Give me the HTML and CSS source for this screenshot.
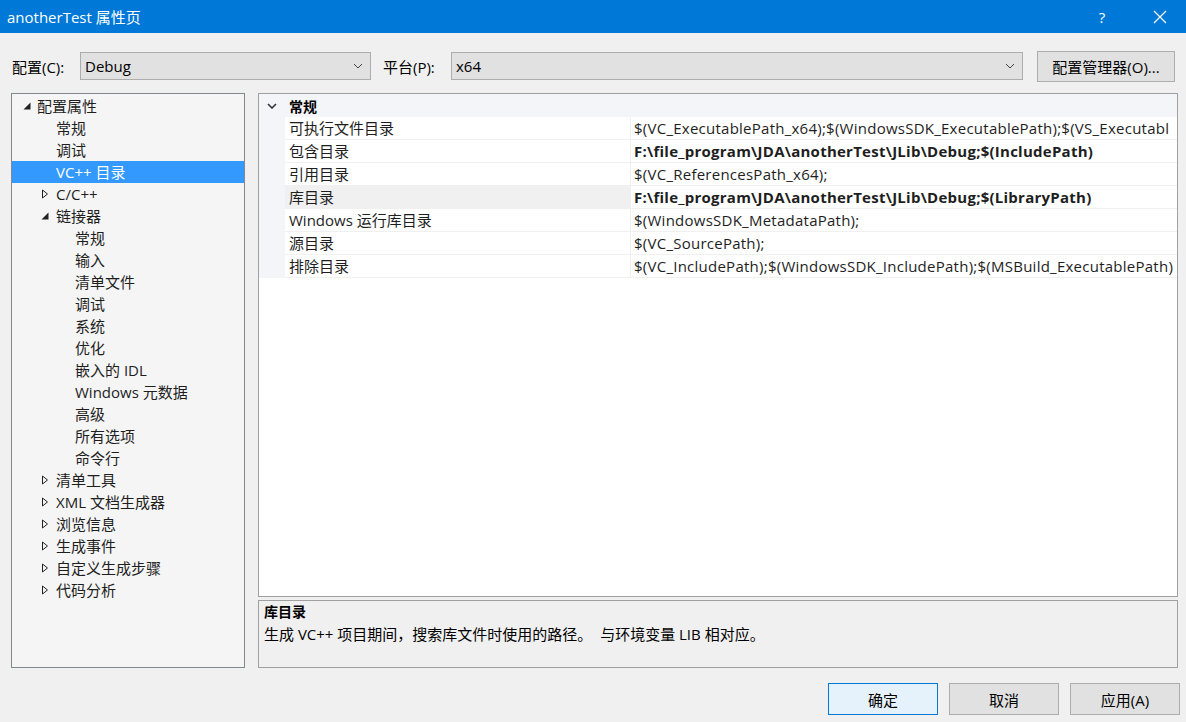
FILE: index.html
```html
<!DOCTYPE html>
<html lang="zh-CN">
<head>
    <meta charset="UTF-8">
    <title>anotherTest 属性页</title>
    <link rel="stylesheet" href="styles.css">
</head>
<body>
<div class="dlg">
    <div class="titlebar">
        <span class="title">anotherTest 属性页</span>
        <span class="tb_help">?</span>
        <span class="tb_close">
            <svg width="14" height="14" viewBox="0 0 14 14"><path d="M1 1L13 13M13 1L1 13" stroke="#fff" stroke-width="1.2" fill="none"/></svg>
        </span>
    </div>

    <div class="cfg_row">
        <label class="cfg_label">配置(C):</label>
        <div class="combo combo_cfg"><span>Debug</span><svg class="chev" width="10" height="6" viewBox="0 0 10 6"><path d="M1 1L5 5L9 1" stroke="#444" stroke-width="1" fill="none"/></svg></div>
        <label class="cfg_label plat_label">平台(P):</label>
        <div class="combo combo_plat"><span>x64</span><svg class="chev" width="10" height="6" viewBox="0 0 10 6"><path d="M1 1L5 5L9 1" stroke="#444" stroke-width="1" fill="none"/></svg></div>
        <div class="btn btn_mgr">配置管理器(O)...</div>
    </div>

    <div class="main">
        <div class="tree">
            <div class="node lv0"><span class="tw"><svg width="8" height="8" viewBox="0 0 8 8"><path d="M7.5 0.5L7.5 7.5L0.5 7.5Z" fill="#222"/></svg></span>配置属性</div>
            <div class="node lv1"><span class="tw"></span>常规</div>
            <div class="node lv1"><span class="tw"></span>调试</div>
            <div class="node lv1 sel"><span class="tw"></span>VC++ 目录</div>
            <div class="node lv1"><span class="tw"><svg width="8" height="10" viewBox="0 0 8 10"><path d="M1.5 1L6.5 5L1.5 9Z" stroke="#222" stroke-width="1" fill="none"/></svg></span>C/C++</div>
            <div class="node lv1"><span class="tw"><svg width="8" height="8" viewBox="0 0 8 8"><path d="M7.5 0.5L7.5 7.5L0.5 7.5Z" fill="#222"/></svg></span>链接器</div>
            <div class="node lv2"><span class="tw"></span>常规</div>
            <div class="node lv2"><span class="tw"></span>输入</div>
            <div class="node lv2"><span class="tw"></span>清单文件</div>
            <div class="node lv2"><span class="tw"></span>调试</div>
            <div class="node lv2"><span class="tw"></span>系统</div>
            <div class="node lv2"><span class="tw"></span>优化</div>
            <div class="node lv2"><span class="tw"></span>嵌入的 IDL</div>
            <div class="node lv2"><span class="tw"></span>Windows 元数据</div>
            <div class="node lv2"><span class="tw"></span>高级</div>
            <div class="node lv2"><span class="tw"></span>所有选项</div>
            <div class="node lv2"><span class="tw"></span>命令行</div>
            <div class="node lv1"><span class="tw"><svg width="8" height="10" viewBox="0 0 8 10"><path d="M1.5 1L6.5 5L1.5 9Z" stroke="#222" stroke-width="1" fill="none"/></svg></span>清单工具</div>
            <div class="node lv1"><span class="tw"><svg width="8" height="10" viewBox="0 0 8 10"><path d="M1.5 1L6.5 5L1.5 9Z" stroke="#222" stroke-width="1" fill="none"/></svg></span>XML 文档生成器</div>
            <div class="node lv1"><span class="tw"><svg width="8" height="10" viewBox="0 0 8 10"><path d="M1.5 1L6.5 5L1.5 9Z" stroke="#222" stroke-width="1" fill="none"/></svg></span>浏览信息</div>
            <div class="node lv1"><span class="tw"><svg width="8" height="10" viewBox="0 0 8 10"><path d="M1.5 1L6.5 5L1.5 9Z" stroke="#222" stroke-width="1" fill="none"/></svg></span>生成事件</div>
            <div class="node lv1"><span class="tw"><svg width="8" height="10" viewBox="0 0 8 10"><path d="M1.5 1L6.5 5L1.5 9Z" stroke="#222" stroke-width="1" fill="none"/></svg></span>自定义生成步骤</div>
            <div class="node lv1"><span class="tw"><svg width="8" height="10" viewBox="0 0 8 10"><path d="M1.5 1L6.5 5L1.5 9Z" stroke="#222" stroke-width="1" fill="none"/></svg></span>代码分析</div>
        </div>

        <div class="right">
            <div class="grid">
                <div class="grid_head">
                    <span class="gh_icon"><svg width="10" height="6" viewBox="0 0 10 6"><path d="M1 1L5 5L9 1" stroke="#333" stroke-width="1.6" fill="none"/></svg></span>
                    <span class="gh_text">常规</span>
                </div>
                <div class="prow"><div class="pname">可执行文件目录</div><div class="pval">$(VC_ExecutablePath_x64);$(WindowsSDK_ExecutablePath);$(VS_Executabl</div></div>
                <div class="prow"><div class="pname">包含目录</div><div class="pval bold">F:\file_program\JDA\anotherTest\JLib\Debug;$(IncludePath)</div></div>
                <div class="prow"><div class="pname">引用目录</div><div class="pval">$(VC_ReferencesPath_x64);</div></div>
                <div class="prow"><div class="pname psel">库目录</div><div class="pval bold">F:\file_program\JDA\anotherTest\JLib\Debug;$(LibraryPath)</div></div>
                <div class="prow"><div class="pname">Windows 运行库目录</div><div class="pval">$(WindowsSDK_MetadataPath);</div></div>
                <div class="prow"><div class="pname">源目录</div><div class="pval">$(VC_SourcePath);</div></div>
                <div class="prow"><div class="pname">排除目录</div><div class="pval">$(VC_IncludePath);$(WindowsSDK_IncludePath);$(MSBuild_ExecutablePath)</div></div>
            </div>
            <div class="desc">
                <div class="desc_title">库目录</div>
                <div class="desc_text">生成 VC++ 项目期间，搜索库文件时使用的路径。&nbsp; 与环境变量 LIB 相对应。</div>
            </div>
        </div>
    </div>

    <div class="foot">
        <div class="btn btn_ok">确定</div>
        <div class="btn">取消</div>
        <div class="btn">应用(A)</div>
    </div>
</div>
</body>
</html>
```

FILE: styles.css
```css
html,body,div{
    margin: 0;
    padding: 0;
}
body{
    background-color: #f0f0f0;
    font-family: "Open Sans", "Noto Sans CJK SC", sans-serif;
    font-size: 15px;
    color: #000;
}
.dlg{
    width: 1186px;
    height: 722px;
    display: flex;
    flex-direction: column;
    overflow: hidden;
}
.titlebar{
    height: 33px;
    background-color: #0078d7;
    color: #fff;
    display: flex;
    align-items: center;
    flex-shrink: 0;
}
.title{
    padding-left: 7px;
    font-size: 15px;
    flex: 1;
}
.tb_help{
    width: 70px;
    text-align: center;
    font-size: 15px;
}
.tb_close{
    width: 46px;
    height: 33px;
    display: flex;
    align-items: center;
    justify-content: center;
    margin-right: 3px;
}
.cfg_row{
    display: flex;
    align-items: center;
    height: 32px;
    padding-left: 12px;
    padding-top: 17px;
}
.cfg_label{
    font-size: 15px;
    width: 68px;
}
.plat_label{
    width: 68px;
    margin-left: 12px;
}
.combo{
    box-sizing: border-box;
    height: 28px;
    background-color: #e1e1e1;
    border: 1px solid #adadad;
    display: flex;
    align-items: center;
    padding-left: 4px;
    padding-right: 7px;
}
.combo span{
    flex: 1;
}
.combo_cfg{
    width: 291px;
}
.combo_plat{
    width: 572px;
}
.btn{
    box-sizing: border-box;
    height: 32px;
    width: 110px;
    background-color: #e1e1e1;
    border: 1px solid #adadad;
    display: flex;
    align-items: center;
    justify-content: center;
}
.btn_mgr{
    width: 138px;
    height: 31px;
    margin-left: 14px;
}
.main{
    display: flex;
    margin-top: 11px;
    margin-left: 11px;
    height: 575px;
}
.tree{
    box-sizing: border-box;
    width: 234px;
    height: 575px;
    border: 1px solid #828790;
    background-color: #f5f5f5;
    padding-top: 1px;
}
.node{
    height: 22px;
    line-height: 22px;
    display: flex;
    align-items: center;
    white-space: nowrap;
    color: #1e1e1e;
}
.tw{
    height: 22px;
    display: flex;
    align-items: center;
}
.lv0{
    padding-left: 11px;
}
.lv0 .tw{
    width: 14px;
}
.lv1{
    padding-left: 29px;
}
.lv1 .tw{
    width: 15px;
}
.lv2{
    padding-left: 48px;
}
.lv2 .tw{
    width: 15px;
}
.sel{
    background-color: #3399ff;
    color: #fff;
}
.right{
    margin-left: 13px;
    width: 920px;
    display: flex;
    flex-direction: column;
}
.grid{
    box-sizing: border-box;
    height: 504px;
    border: 1px solid #a0a0a0;
    background-color: #fff;
    overflow: hidden;
}
.grid_head{
    height: 23px;
    display: flex;
    align-items: center;
    background-color: #f3f5f8;
}
.gh_icon{
    width: 26px;
    display: flex;
    justify-content: center;
}
.gh_text{
    font-weight: bold;
    font-size: 14px;
    padding-left: 4px;
}
.prow{
    height: 23px;
    display: flex;
    border-left: 26px solid #f3f5f8;
}
.pname{
    box-sizing: border-box;
    width: 346px;
    padding-left: 4px;
    line-height: 22px;
    border-bottom: 1px solid #f0f0f0;
    border-right: 1px solid #f0f0f0;
    white-space: nowrap;
    color: #1e1e1e;
}
.psel{
    background-color: #f0f0f0;
}
.pval{
    flex: 1;
    padding-left: 3px;
    line-height: 22px;
    border-bottom: 1px solid #f0f0f0;
    white-space: nowrap;
    overflow: hidden;
    letter-spacing: 0.25px;
    color: #1e1e1e;
}
.bold{
    font-weight: bold;
}
.desc{
    box-sizing: border-box;
    margin-top: 3px;
    height: 68px;
    border: 1px solid #a0a0a0;
    background-color: #f0f0f0;
    padding: 1px 5px;
}
.desc_title{
    font-weight: bold;
    font-size: 14px;
    line-height: 20px;
}
.desc_text{
    font-size: 15px;
    line-height: 25px;
}
.foot{
    display: flex;
    justify-content: flex-end;
    gap: 11px;
    margin-top: 15px;
    padding-right: 6px;
}
.btn_ok{
    background-color: #e5f1fb;
    border: 1px solid #0078d7;
}
```
